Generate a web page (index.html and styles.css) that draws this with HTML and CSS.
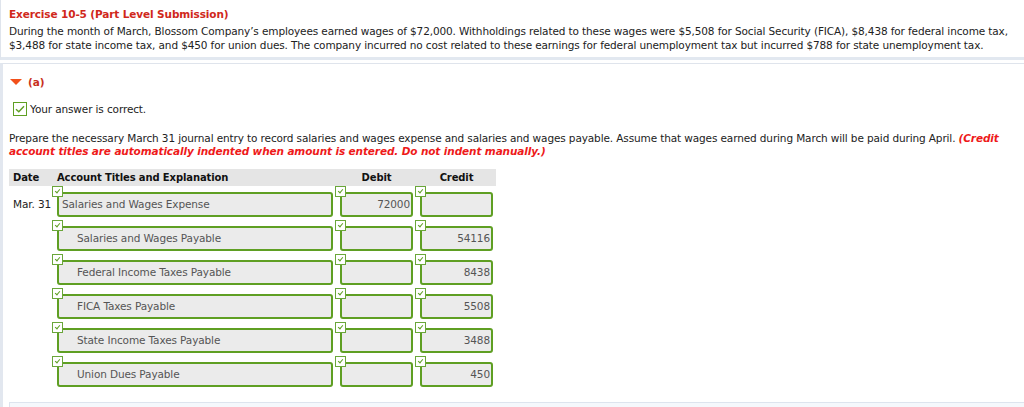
FILE: index.html
```html
<!DOCTYPE html>
<html>
<head>
<meta charset="utf-8">
<link rel="stylesheet" href="styles.css">
</head>
<body>
<div class="question">
  <div class="q-title">Exercise 10-5 (Part Level Submission)</div>
  <p class="q-text">During the month of March, Blossom Company’s employees earned wages of $72,000. Withholdings related to these wages were $5,508 for Social Security (FICA), $8,438 for federal income tax, $3,488 for state income tax, and $450 for union dues. The company incurred no cost related to these earnings for federal unemployment tax but incurred $788 for state unemployment tax.</p>
</div>
<div class="part">
  <div class="part-head"><span class="tri"></span><span class="part-label">(a)</span></div>
  <div class="correct"><span class="okbox"><svg width="10" height="8" viewBox="0 0 10 8"><path d="M1 4.2 L3.8 6.8 L9 1.2" fill="none" stroke="#5f9f23" stroke-width="1.4"/></svg></span>Your answer is correct.</div>
  <p class="instr">Prepare the necessary March 31 journal entry to record salaries and wages expense and salaries and wages payable. Assume that wages earned during March will be paid during April. <em class="note">(Credit account titles are automatically indented when amount is entered. Do not indent manually.)</em></p>
  <div class="journal">
    <div class="jhead">
      <div class="h-date">Date</div>
      <div class="h-acct">Account Titles and Explanation</div>
      <div class="h-num">Debit</div>
      <div class="h-num">Credit</div>
    </div>
    <div class="jrow">
      <div class="date">Mar. 31</div>
      <div class="cell"><span class="tick"></span><div class="fld acct">Salaries and Wages Expense</div></div>
      <div class="cell"><span class="tick"></span><div class="fld num">72000</div></div>
      <div class="cell"><span class="tick"></span><div class="fld num"></div></div>
    </div>
    <div class="jrow">
      <div class="date"></div>
      <div class="cell"><span class="tick"></span><div class="fld acct indent">Salaries and Wages Payable</div></div>
      <div class="cell"><span class="tick"></span><div class="fld num"></div></div>
      <div class="cell"><span class="tick"></span><div class="fld num">54116</div></div>
    </div>
    <div class="jrow">
      <div class="date"></div>
      <div class="cell"><span class="tick"></span><div class="fld acct indent">Federal Income Taxes Payable</div></div>
      <div class="cell"><span class="tick"></span><div class="fld num"></div></div>
      <div class="cell"><span class="tick"></span><div class="fld num">8438</div></div>
    </div>
    <div class="jrow">
      <div class="date"></div>
      <div class="cell"><span class="tick"></span><div class="fld acct indent">FICA Taxes Payable</div></div>
      <div class="cell"><span class="tick"></span><div class="fld num"></div></div>
      <div class="cell"><span class="tick"></span><div class="fld num">5508</div></div>
    </div>
    <div class="jrow">
      <div class="date"></div>
      <div class="cell"><span class="tick"></span><div class="fld acct indent">State Income Taxes Payable</div></div>
      <div class="cell"><span class="tick"></span><div class="fld num"></div></div>
      <div class="cell"><span class="tick"></span><div class="fld num">3488</div></div>
    </div>
    <div class="jrow">
      <div class="date"></div>
      <div class="cell"><span class="tick"></span><div class="fld acct indent">Union Dues Payable</div></div>
      <div class="cell"><span class="tick"></span><div class="fld num"></div></div>
      <div class="cell"><span class="tick"></span><div class="fld num">450</div></div>
    </div>
  </div>
  <div class="next-box"></div>
</div>
</body>
</html>
```
FILE: styles.css
```css
html, body {
  margin: 0;
  padding: 0;
  background: #ffffff;
}
body {
  font-family: "DejaVu Sans", Verdana, sans-serif;
  font-size: 10.5px;
  letter-spacing: -0.12px;
  color: #222222;
  overflow: hidden;
  height: 407px;
}
.question {
  border-left: 1px solid #dfe4ec;
  border-bottom: 3px solid #e2e8f0;
  padding: 7px 8px 5px 8px;
  height: 45px;
}
.q-title {
  color: #d0281b;
  font-weight: bold;
  line-height: 14px;
  margin-bottom: 3px;
}
.q-text {
  margin: 0;
  line-height: 14px;
}
.part {
  margin-top: 3px;
  border-top: 1px solid #dfe4ec;
  border-left: 3px solid #e2e7ef;
  padding: 0 0 0 6px;
}
.part-head {
  display: flex;
  align-items: center;
  height: 14px;
  margin-top: 11px;
}
.tri {
  width: 0;
  height: 0;
  border-left: 6px solid transparent;
  border-right: 6px solid transparent;
  border-top: 6px solid #f2501a;
  margin-left: 1px;
  margin-right: 6px;
}
.part-label {
  color: #c8321e;
  font-weight: bold;
}
.correct {
  display: flex;
  align-items: center;
  margin-top: 13px;
  margin-left: 4px;
  height: 14px;
}
.okbox {
  width: 12px;
  height: 12px;
  border: 1px solid #5f9f23;
  display: inline-flex;
  align-items: center;
  justify-content: center;
  margin-right: 3px;
  background: #fff;
}
.instr {
  margin: 16px 0 0 0;
  line-height: 13px;
}
.note {
  color: #ee1a1a;
  font-weight: bold;
  font-style: italic;
}
.journal {
  margin-top: 11px;
  width: 487px;
}
.jhead {
  display: grid;
  grid-template-columns: 41px 276px 73px 73px;
  column-gap: 7px;
  background: #e5e5e5;
  height: 17px;
  align-items: center;
  font-weight: bold;
  font-size: 10px;
  color: #111;
}
.h-date { padding-left: 4px; }
.h-num { text-align: center; }
.jrow {
  display: grid;
  grid-template-columns: 41px 276px 73px 73px;
  column-gap: 7px;
  height: 25px;
  margin-top: 9px;
}
.jhead + .jrow {
  margin-top: 6px;
}
.date {
  padding-left: 4px;
  line-height: 25px;
  white-space: nowrap;
}
.cell {
  position: relative;
}
.fld {
  box-sizing: border-box;
  height: 25px;
  border: 2px solid #5f9f23;
  border-radius: 3px;
  background: #ebebeb;
  color: #555555;
  line-height: 21px;
  white-space: nowrap;
}
.acct { padding-left: 3px; }
.indent { padding-left: 18px; }
.num { text-align: right; padding-right: 1px; }
.tick {
  position: absolute;
  left: -5px;
  top: -6px;
  width: 9px;
  height: 9px;
  border: 1px solid #6aa63a;
  background: #fff;
  z-index: 1;
}
.tick::after {
  content: "";
  position: absolute;
  left: 3px;
  top: 1px;
  width: 2px;
  height: 4px;
  border-right: 1.5px solid #5f9f23;
  border-bottom: 1.5px solid #5f9f23;
  transform: rotate(40deg);
}
.next-box {
  margin-top: 15px;
  margin-left: 0;
  height: 10px;
  background: #f5f8fc;
  border-top: 1px solid #dde4ee;
  border-left: 1px solid #dde4ee;
}
```
